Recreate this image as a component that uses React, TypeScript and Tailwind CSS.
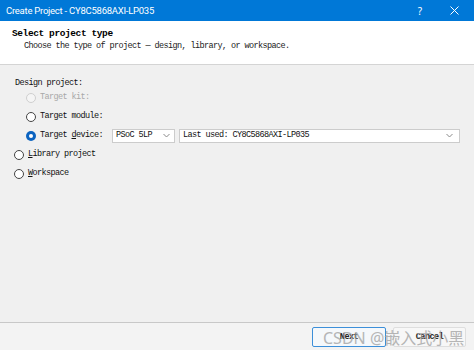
import React from "react";

const mono = { fontFamily: '"Liberation Mono", "DejaVu Sans Mono", monospace' };

function Chevron() {
  return (
    <svg width="7" height="5" viewBox="0 0 7 5" className="shrink-0">
      <path d="M0.5 1 L3.5 4 L6.5 1" fill="none" stroke="#8a8a8a" strokeWidth="1" />
    </svg>
  );
}

function Radio({ state }: { state: "off" | "on" | "disabled" }) {
  if (state === "on") {
    return (
      <div className="w-[10px] h-[10px] rounded-full bg-[#0b63c0] flex items-center justify-center shrink-0">
        <div className="w-[4px] h-[4px] rounded-full bg-white" />
      </div>
    );
  }
  if (state === "disabled") {
    return <div className="w-[10px] h-[10px] rounded-full border border-[#cfcfcf] bg-[#f5f5f5] shrink-0" />;
  }
  return <div className="w-[10px] h-[10px] rounded-full border border-[#444] bg-white shrink-0" />;
}

export default function App() {
  return (
    <div className="w-[474px] h-[350px] flex flex-col bg-[#f0f0f0] overflow-hidden relative" style={mono}>
      {/* Title bar */}
      <div className="h-[21px] bg-[#0078d7] flex items-center text-white shrink-0">
        <span
          className="pl-[6px] text-[9.5px] tracking-[-0.25px] leading-none"
          style={{ fontFamily: 'Roboto, "Noto Sans", sans-serif' }}
        >
          Create Project - CY8C5868AXI-LP035
        </span>
        <span
          className="ml-auto text-[10px] leading-none mr-[28px]"
          style={{ fontFamily: '"Noto Sans", sans-serif' }}
        >
          ?
        </span>
        <svg width="9" height="9" viewBox="0 0 9 9" className="mr-[15px]">
          <path d="M0.5 0.5 L8.5 8.5 M8.5 0.5 L0.5 8.5" stroke="white" strokeWidth="1" />
        </svg>
      </div>

      {/* Header */}
      <div className="h-[44px] bg-white border-b border-[#d4d4d4] shrink-0 flex flex-col pt-[7px]">
        <div className="pl-[12px] h-[12px] flex items-center text-[9.5px] tracking-[-0.4px] font-bold text-black leading-none">
          Select project type
        </div>
        <div className="pl-[24px] h-[12px] flex items-center text-[8.5px] tracking-[-0.6px] text-[#222] leading-none">
          Choose the type of project — design, library, or workspace.
        </div>
      </div>

      {/* Body */}
      <div className="flex-1 flex flex-col pt-[13px] text-[8.5px] tracking-[-0.6px] text-[#111] leading-none">
        <div className="h-[10px] pl-[15px] flex items-center">Design project:</div>
        <div className="h-[19px] pl-[26px] flex items-center gap-[4px]">
          <Radio state="disabled" />
          <span className="text-[#a8a8a8]">Target kit:</span>
        </div>
        <div className="h-[19px] pl-[26px] flex items-center gap-[4px]">
          <Radio state="off" />
          <span>Target module:</span>
        </div>
        <div className="h-[19px] pl-[26px] flex items-center">
          <Radio state="on" />
          <span className="ml-[4px] w-[72px]">
            Target <span className="underline">d</span>evice:
          </span>
          <div className="w-[63px] h-[14px] bg-white border border-[#cccccc] flex items-center pl-[3px] pr-[4px]">
            <span className="flex-1">PSoC 5LP</span>
            <Chevron />
          </div>
          <div className="ml-[4px] w-[281px] h-[14px] bg-white border border-[#cccccc] flex items-center pl-[3px] pr-[6px]">
            <span className="flex-1">Last used: CY8C5868AXI-LP035</span>
            <Chevron />
          </div>
        </div>
        <div className="h-[19px] pl-[14px] flex items-center gap-[4px]">
          <Radio state="off" />
          <span>
            <span className="underline">L</span>ibrary project
          </span>
        </div>
        <div className="h-[19px] pl-[14px] flex items-center gap-[4px]">
          <Radio state="off" />
          <span>
            <span className="underline">W</span>orkspace
          </span>
        </div>
      </div>

      {/* Footer */}
      <div className="h-[28px] border-t border-[#c8c8c8] bg-[#f3f3f3] shrink-0 flex items-start pt-[4px] pr-[8px] justify-end gap-[7px]">
        <div className="w-[74px] h-[20px] border border-[#3c8fd9] rounded-[2px] bg-[#f5f8fb] flex items-center justify-center text-[8.5px] tracking-[-0.5px] font-bold text-[#222]">
          Next
        </div>
        <div className="w-[73px] h-[20px] border border-[#dedede] rounded-[2px] bg-[#f7f7f7] flex items-center justify-center text-[8.5px] tracking-[-0.5px] font-bold text-[#222]">
          Cancel
        </div>
      </div>

      {/* Watermark */}
      <div
        className="absolute left-[323px] top-[329px] text-[16px] leading-[18px] text-[#a5a5a5] opacity-80 pointer-events-none whitespace-nowrap"
        style={{ fontFamily: '"Noto Sans", "Noto Sans CJK SC", sans-serif' }}
      >
        CSDN @嵌入式小黑
      </div>
    </div>
  );
}
